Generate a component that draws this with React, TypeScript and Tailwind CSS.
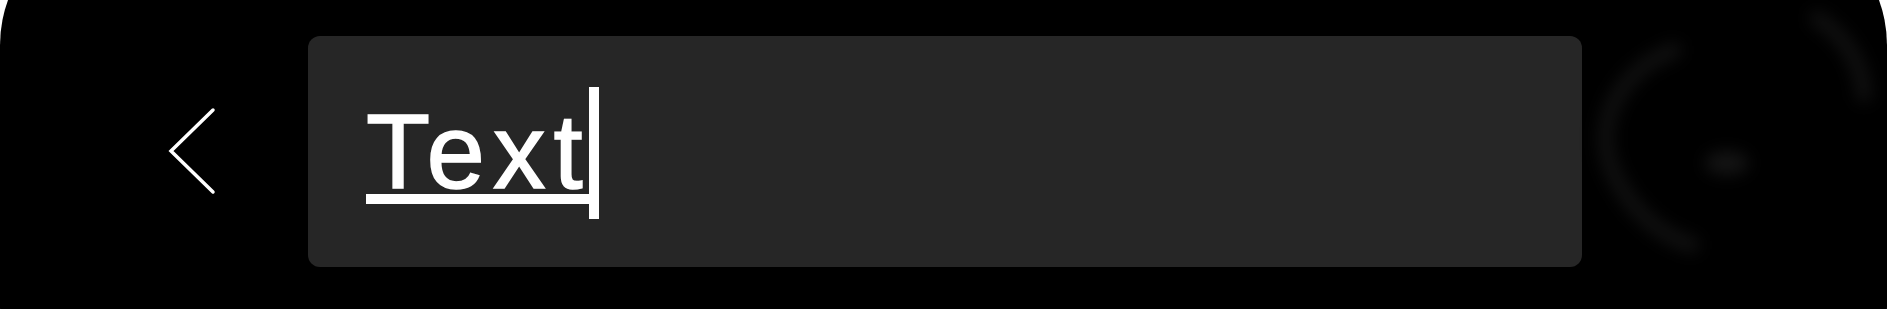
export default function App() {
  return (
    <div className="h-[309px] w-full overflow-hidden bg-white">
      {/* black device frame, top corners rounded above the viewport */}
      <div className="-mt-[85px] h-[520px] rounded-[130px] bg-black pt-[121px]">
        <div className="flex items-start">
          {/* back button */}
          <div className="flex h-[231px] w-[308px] items-center">
            <svg className="ml-[168px] h-[90px] w-[50px]" viewBox="0 0 50 90" fill="none">
              <polyline
                points="45,3 3,44 45,85"
                stroke="white"
                strokeWidth="3.5"
                strokeLinecap="round"
                strokeLinejoin="miter"
              />
            </svg>
          </div>

          {/* text field */}
          <div className="flex h-[231px] w-[1274px] items-center rounded-[12px] bg-[#262626] pl-[58px]">
            <span className="font-['Liberation_Sans',Arial,sans-serif] text-[105px] leading-none tracking-[8px] text-white underline decoration-[10px] underline-offset-[6px] [-webkit-text-stroke:1.5px_white]">
              Text
            </span>
            <div className="-ml-[2px] mt-[2px] h-[132px] w-[10px] bg-white" />
          </div>

          {/* faint ghost of the mic button */}
          <svg className="-mt-[36px] h-[309px] w-[305px] blur-[8px]" viewBox="0 0 305 309" fill="none">
            <g stroke="#101010" strokeWidth="16" strokeLinecap="round">
              <path d="M 92 50 C 40 70, 10 120, 30 170 C 45 205, 75 235, 110 245" />
              <path d="M 235 18 C 260 35, 280 60, 282 95" />
            </g>
            <ellipse cx="145" cy="163" rx="22" ry="12" fill="#141414" />
          </svg>
        </div>
      </div>
    </div>
  )
}
